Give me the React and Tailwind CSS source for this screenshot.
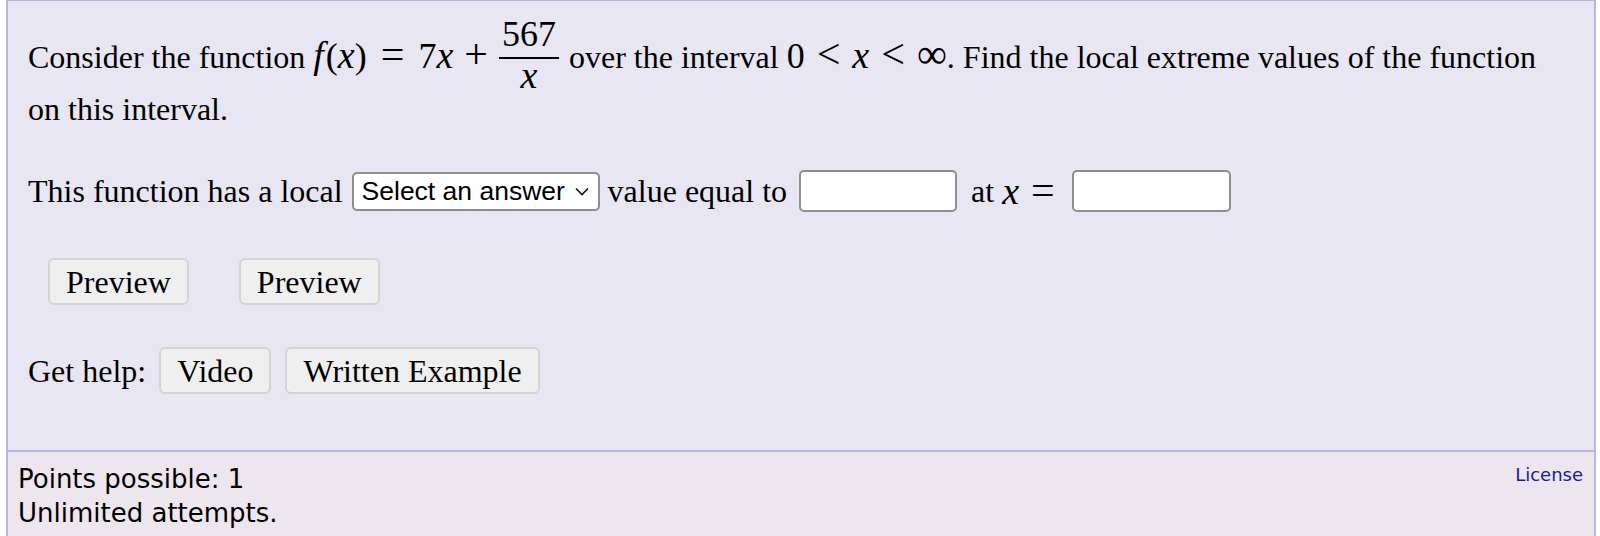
export default function App() {
  const btn =
    "inline-flex items-center h-[47px] px-[16px] bg-[#efefef] border-2 border-[#d3d3d3] rounded-[6px] text-[32px] leading-[36px] text-black";
  const box = "h-[42px] bg-white border-2 border-[#8e8e8e] rounded-[5px]";
  const op = "text-[42px] leading-[36px]";
  const v = "italic text-[38px] leading-[36px]";
  return (
    <div className="w-[1600px] h-[536px] bg-white overflow-hidden">
      <div className="ml-[6px] w-[1590px] border-x-2 border-t border-[#b5b8dc]">
        <div className="bg-[#e8e6f2] pl-[20px] pr-[20px] pt-[15px] pb-[56px] text-[32px] leading-[36px] text-black font-['Liberation_Serif',serif]">
          <p className="whitespace-nowrap">
            Consider the function{" "}
            <span className="text-[36px] leading-[36px]">
              <i className={`${v} mr-[2px]`}>f</i>(<i className={v}>x</i>)
              <span className={`${op} mx-[14px]`}>=</span>7<i className={v}>x</i>
              <span className={`${op} mx-[11px]`}>+</span>
            </span>
            <span className="inline-flex flex-col items-center align-[22px] mb-[4px] mr-[2px] text-[36px]">
              <span className="leading-[36px] pb-[5px] px-[3px]">567</span>
              <span className="block h-[2px] w-full bg-black"></span>
              <span className="leading-[24px] mt-[4px] italic text-[38px]">x</span>
            </span>{" "}
            over the interval{" "}
            <span className="text-[36px] leading-[36px]">
              0<span className={`${op} mx-[12px]`}>&lt;</span>
              <i className={v}>x</i>
              <span className={`${op} mx-[12px]`}>&lt;</span>
              <span className="text-[42px] leading-[36px]">∞</span>
            </span>
            . Find the local extreme values of the function
            <br />
            on this interval.
          </p>

          <div className="mt-[43px] flex items-center whitespace-nowrap">
            <span>This function has a local</span>
            <div className="ml-[9px] flex items-center justify-between h-[39px] w-[248px] bg-white border-2 border-[#8e8e8e] rounded-[5px] pl-[8px] pr-[9px] font-['Liberation_Sans',sans-serif] text-[26.5px] leading-[30px]">
              <span>Select an answer</span>
              <svg width="14" height="9" viewBox="0 0 14 9" fill="none">
                <path d="M1 1.5 L7 7.5 L13 1.5" stroke="#111" strokeWidth="1.6" />
              </svg>
            </div>
            <span className="ml-[8px]">value equal to</span>
            <div className={`ml-[12px] w-[158px] ${box}`}></div>
            <span className="ml-[14px]">at</span>
            <span className="ml-[8px] leading-[36px]">
              <i className={v}>x</i>
              <span className={`${op} ml-[12px]`}>=</span>
            </span>
            <div className={`ml-[17px] w-[159px] ${box}`}></div>
          </div>

          <div className="mt-[46px] flex items-center">
            <button className={`ml-[20px] ${btn}`}>Preview</button>
            <button className={`ml-[50px] ${btn}`}>Preview</button>
          </div>

          <div className="mt-[42px] flex items-center">
            <span>Get help:</span>
            <button className={`ml-[13px] ${btn}`}>Video</button>
            <button className={`ml-[14px] ${btn}`}>Written Example</button>
          </div>
        </div>

        <div className="bg-[#ede6ef] border-t-2 border-[#b5b8dc] pl-[10px] pr-[11px] pt-[10px] pb-[20px] flex justify-between font-['DejaVu_Sans',sans-serif] text-black">
          <div className="text-[26px] leading-[34px]">
            Points possible: 1
            <br />
            Unlimited attempts.
          </div>
          <a className="mt-[1px] text-[18px] leading-[24px] text-[#1a1a9a]">License</a>
        </div>
      </div>
    </div>
  );
}
